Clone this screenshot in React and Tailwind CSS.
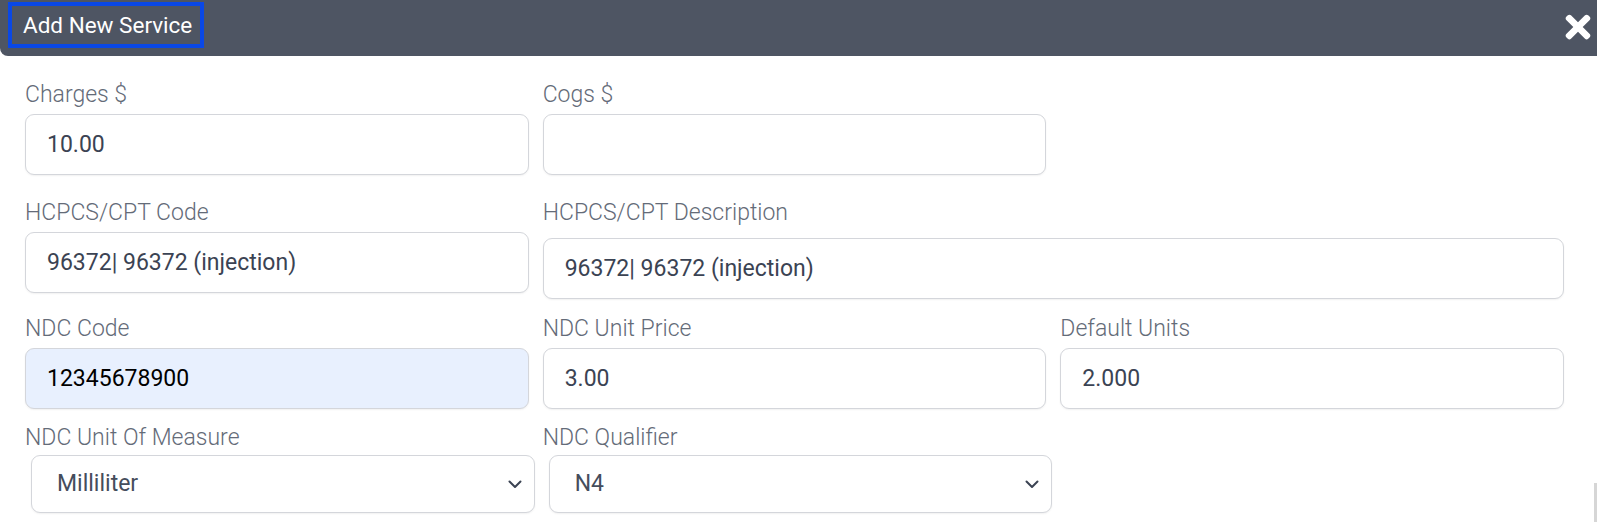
import { FaTimes } from 'react-icons/fa';

const inputCls =
  'block h-[61px] w-full rounded-[9px] border border-[#d4d6db] bg-white px-[21px] text-[23px] text-[#3b4353] shadow-[0_1px_2px_rgba(0,0,0,0.06)] outline-none';

const labelCls = 'block h-[24px] text-[23px] font-light leading-[24px] text-[#646b78]';

function Field({ label, value, inputClass = '' }) {
  return (
    <div>
      <label className={`mb-[7px] ${labelCls}`}>{label}</label>
      <input readOnly value={value} className={`${inputCls} ${inputClass}`} />
    </div>
  );
}

function SelectField({ label, value }) {
  return (
    <div>
      <label className={`mb-[5px] ${labelCls}`}>{label}</label>
      <div className="ml-[6px] flex h-[58px] w-full items-center rounded-[9px] border border-[#d4d6db] bg-white pl-[25px] pr-[12px] shadow-[0_1px_2px_rgba(0,0,0,0.06)]">
        <span className="flex-1 text-[23px] text-[#454d5c]">{value}</span>
        <svg width="14" height="9" viewBox="0 0 14 9" fill="none">
          <path d="M1.5 1.5 7 7l5.5-5.5" stroke="#3b4353" strokeWidth="2" strokeLinecap="round" strokeLinejoin="round" />
        </svg>
      </div>
    </div>
  );
}

export default function App() {
  return (
    <div className="relative h-[522px] w-[1597px] overflow-hidden bg-white font-['Roboto',sans-serif]">
      <div className="flex h-[56px] items-start justify-between rounded-bl-[8px] bg-[#4e5563] pl-[8px] pr-[1px]">
        <div className="mt-[2px] flex h-[46px] items-center border-[4px] border-[#0a48e6] pl-[11px] pr-[8px]">
          <span className="text-[22.5px] leading-none text-white">Add New Service</span>
        </div>
        <FaTimes className="mt-[9px] text-white" size={36} />
      </div>

      <div className="pl-[25px] pr-[33px]">
        <div className="mt-[27px] grid grid-cols-3 gap-x-[14px]">
          <Field label="Charges $" value="10.00" />
          <Field label="Cogs $" value="" />
        </div>

        <div className="mt-[26px] grid grid-cols-3 gap-x-[14px]">
          <Field label="HCPCS/CPT Code" value="96372| 96372 (injection)" />
          <div className="col-span-2">
            <label className={`mb-[13px] ${labelCls}`}>HCPCS/CPT Description</label>
            <input readOnly value="96372| 96372 (injection)" className={inputCls} />
          </div>
        </div>

        <div className="mt-[18px] grid grid-cols-3 gap-x-[14px]">
          <Field label="NDC Code" value="12345678900" inputClass="!bg-[#e8f0fe] !text-black" />
          <Field label="NDC Unit Price" value="3.00" />
          <Field label="Default Units" value="2.000" />
        </div>

        <div className="mt-[17px] grid grid-cols-3 gap-x-[14px]">
          <SelectField label="NDC Unit Of Measure" value="Milliliter" />
          <SelectField label="NDC Qualifier" value="N4" />
        </div>
      </div>

      <div className="absolute bottom-0 right-0 h-[39px] w-[3px] bg-[#d6d6d6]" />
    </div>
  );
}
